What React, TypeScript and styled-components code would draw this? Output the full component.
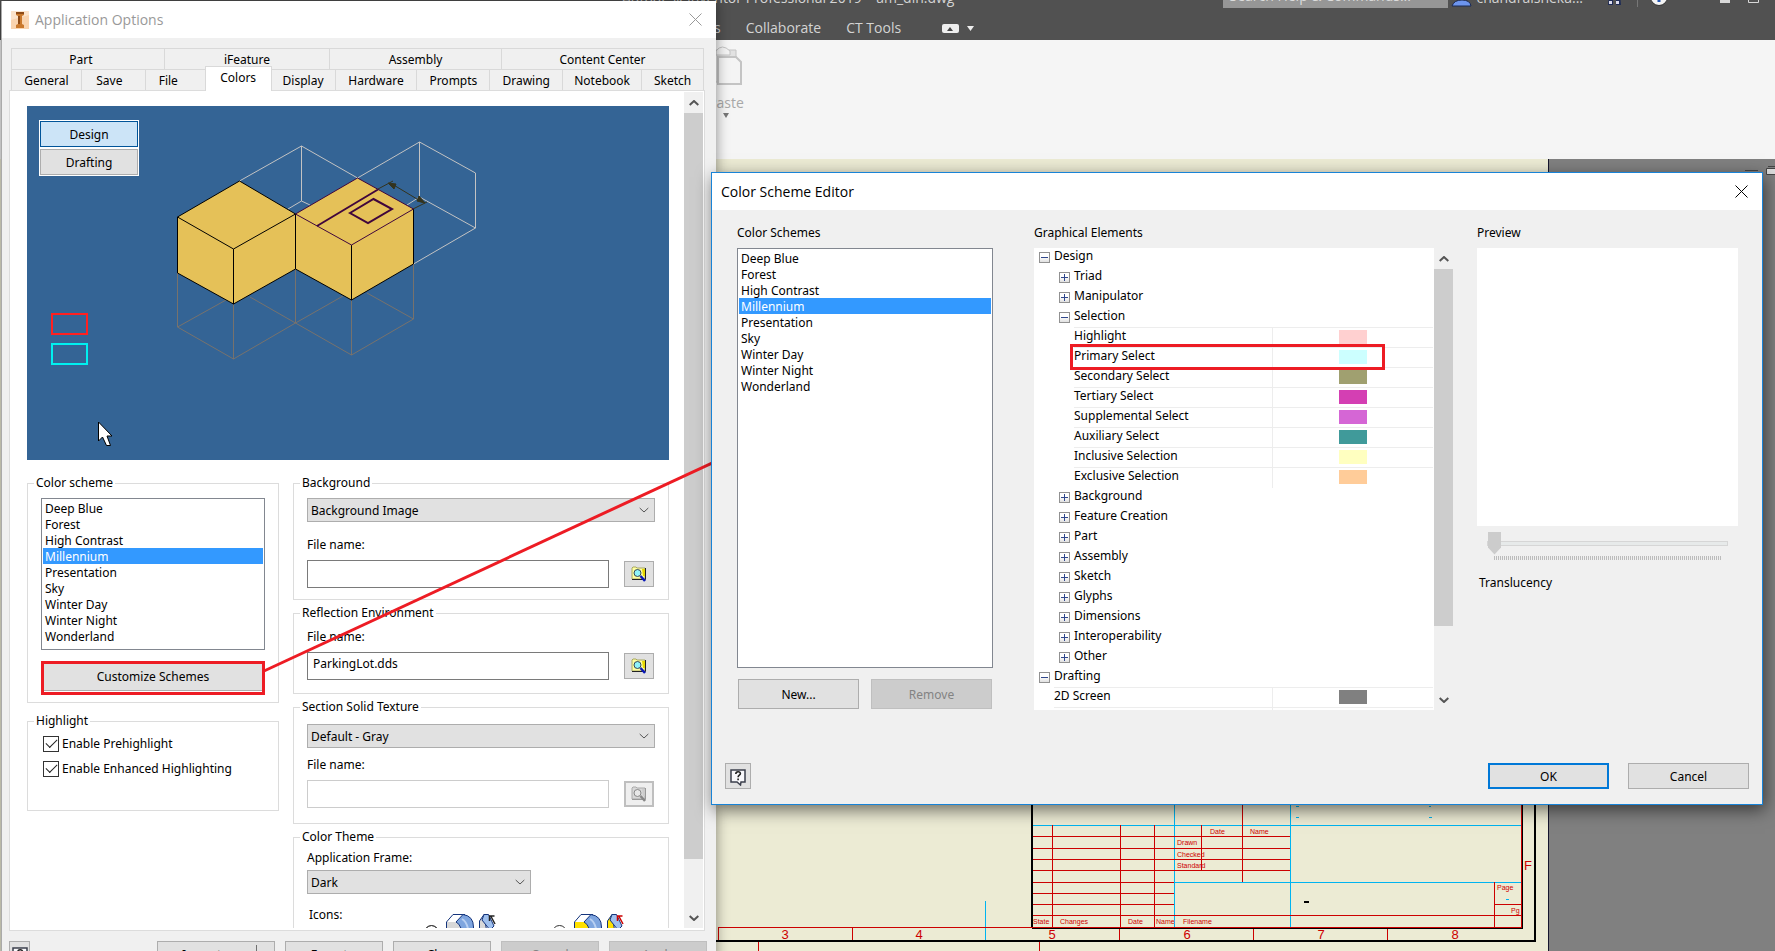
import React from "react";
import styled, { createGlobalStyle } from "styled-components";

const GlobalStyle = createGlobalStyle`
  *, *::before, *::after { box-sizing: border-box; }
  body { margin: 0; background: #808080; }
  body, button, input, select {
    font-family: "Noto Sans", "Liberation Sans", sans-serif;
    font-size: 12px;
    line-height: 16px;
    color: #000;
  }
  ul { list-style: none; margin: 0; padding: 0; }
`;

/* ---------- Application behind the dialogs ---------- */

const Desktop = styled.main`
  position: relative;
  height: 100vh;
  overflow: hidden;
  display: flex;
  flex-direction: column;
  background: #808080;
`;

const AppHeader = styled.header`
  flex: none;
  height: 40px;
  background: #515151;
  color: #d4d4d4;
  display: flex;
  flex-direction: column;
  justify-content: space-between;
  overflow: hidden;
`;

const TitleStrip = styled.div`
  height: 8px;
  display: flex;
  align-items: flex-end;
  justify-content: flex-end;
  padding-right: 2px;
`;

const StripText = styled.span`
  font-family: "Open Sans", sans-serif;
  font-size: 14px;
  line-height: 20px;
  white-space: pre;
`;

const SearchBox = styled.input`
  width: 225px;
  height: 20px;
  margin-left: 269px;
  border: 0;
  padding: 0 6px 6px;
  background: #969696;
  font-family: "Open Sans", sans-serif;
  font-size: 14px;
  &::placeholder { color: #dcdcdc; opacity: 1; }
`;

const StripIcons = styled.svg`
  margin-left: 20px;
`;

const RibbonTabs = styled.nav`
  display: flex;
  align-items: center;
  gap: 25px;
  height: 24px;
  padding: 0 0 0 686px;
`;

const RibbonTab = styled.a`
  color: #d4d4d4;
  text-decoration: none;
  font-family: "Open Sans", sans-serif;
  font-size: 14px;
  line-height: 20px;
`;

const RibbonPanel = styled.section`
  flex: none;
  height: 119px;
  padding: 5px 0 0 708px;
  background: #f5f5f5;
`;

const PasteButton = styled.button`
  display: flex;
  flex-direction: column;
  align-items: center;
  width: 36px;
  padding: 0;
  border: 0;
  background: none;
  color: #a8a8a8;
  font-family: "Open Sans", sans-serif;
  font-size: 14px;
  line-height: 20px;
`;

const Workspace = styled.section`
  flex: 1;
  min-height: 0;
  display: flex;
`;

const Sheet = styled.div`
  flex: 1;
  display: flex;
  justify-content: flex-end;
  align-items: flex-end;
  background: #ecebd4;
  border-right: 1px solid #16162e;
`;

const Margin = styled.aside`
  width: 226px;
  display: flex;
  justify-content: flex-end;
  padding-top: 4px;
`;

/* ---------- Window chrome ---------- */

const TitleBar = styled.div<{ $inactive?: boolean }>`
  flex: none;
  display: flex;
  align-items: center;
  gap: 6px;
  height: 37px;
  padding: 0 14px 0 9px;
  background: #fff;
  color: ${(p) => (p.$inactive ? "#999" : "#000")};
`;

const WindowTitle = styled.h1`
  flex: 1;
  margin: 0;
  font-family: "Open Sans", sans-serif;
  font-size: 14px;
  line-height: 20px;
  font-weight: 400;
`;

const PlainButton = styled.button`
  display: flex;
  align-items: center;
  justify-content: center;
  padding: 0;
  border: 0;
  background: none;
  color: inherit;
`;

const Button = styled.button<{ $width?: number; $primary?: boolean }>`
  display: flex;
  align-items: center;
  justify-content: center;
  flex: none;
  width: ${(p) => (p.$width ? p.$width + "px" : "auto")};
  height: 26px;
  padding: 2px 0 0;
  border: ${(p) => (p.$primary ? "2px solid #0078d7" : "1px solid #adadad")};
  background: #e1e1e1;
  &:disabled { background: #ccc; border-color: #bfbfbf; color: #838383; }
`;

const ListBox = styled.ul<{ $height: number }>`
  height: ${(p) => p.$height}px;
  padding: 1px;
  border: 1px solid #828790;
  background: #fff;
`;

const ListItem = styled.li<{ $selected: boolean }>`
  height: 16px;
  padding: 0 2px;
  line-height: 18px;
  background: ${(p) => (p.$selected ? "#3399ff" : "transparent")};
  color: ${(p) => (p.$selected ? "#fff" : "#000")};
`;

const ScrollTrack = styled.div`
  flex: none;
  width: 19px;
  display: flex;
  flex-direction: column;
  background: #f0f0f0;
`;

const ScrollArrow = styled(PlainButton)`
  flex: none;
  height: 21px;
  color: #606060;
`;

const ScrollLane = styled.div`
  flex: 1;
`;

const ScrollThumb = styled.div<{ $percent: number }>`
  height: ${(p) => p.$percent}%;
  background: #cdcdcd;
`;

/* ---------- Application Options ---------- */

const OptionsWindow = styled.section`
  position: absolute;
  top: 1px;
  left: 1px;
  bottom: -20px;
  width: 715px;
  display: flex;
  flex-direction: column;
  background: #f0f0f0;
  border-left: 1px solid #aaa;
  box-shadow: 0 0 12px rgba(0, 0, 0, 0.45);
`;

const Tabs = styled.div`
  flex: none;
  padding: 10px 12px 0 9px;
`;

const TabRow = styled.div<{ $tabs: TabSpec[] }>`
  display: grid;
  grid-template-columns: ${(p) => p.$tabs.map((t) => `minmax(0, ${t.grow}fr)`).join(" ")};
  height: 21px;
  border-left: 1px solid #d9d9d9;
`;

const Tab = styled.button<{ $trail?: number; $active?: boolean }>`
  min-width: 0;
  padding: ${(p) => (p.$active ? 0 : 2)}px ${(p) => p.$trail ?? 0}px ${(p) => (p.$active ? 2 : 0)}px 0;
  margin-top: ${(p) => (p.$active ? -3 : 0)}px;
  margin-left: ${(p) => (p.$active ? -1 : 0)}px;
  margin-bottom: ${(p) => (p.$active ? -1 : 0)}px;
  z-index: ${(p) => (p.$active ? 1 : 0)};
  border: 0;
  border-top: 1px solid #d9d9d9;
  border-right: 1px solid #d9d9d9;
  border-left: ${(p) => (p.$active ? "1px solid #d9d9d9" : "0")};
  background: ${(p) => (p.$active ? "#fff" : "#f0f0f0")};
`;

const TabPanel = styled.div`
  flex: 1;
  min-height: 0;
  display: flex;
  margin: 0 11px 0 7px;
  padding: 1px 1px 2px 0;
  border: 1px solid #dcdcdc;
  background: #fff;
`;

const PanelContent = styled.div`
  flex: 1;
  min-width: 0;
  overflow: hidden;
  padding: 14px 15px 0 17px;
`;

const PreviewCanvas = styled.div`
  position: relative;
  height: 354px;
  background: #346495;
`;

const CanvasDrawing = styled.svg`
  display: block;
  width: 100%;
  height: 100%;
`;

const ModeSwitch = styled.div`
  position: absolute;
  top: 14px;
  left: 12px;
  width: 100px;
  padding: 1px;
  display: grid;
  gap: 2px;
  background: #fff;
`;

const ModeButton = styled.button<{ $on?: boolean }>`
  height: 26px;
  padding: 2px 0 0;
  border: 1px solid ${(p) => (p.$on ? "#005499" : "#adadad")};
  background: ${(p) => (p.$on ? "#cce4f7" : "#e1e1e1")};
`;

const Columns = styled.div`
  display: flex;
  gap: 14px;
  padding-top: 15px;
`;

const Column = styled.div<{ $width?: number; $gap: number }>`
  flex: ${(p) => (p.$width ? `0 0 ${p.$width}px` : "1")};
  min-width: 0;
  display: flex;
  flex-direction: column;
  gap: ${(p) => p.$gap}px;
`;

const Group = styled.fieldset<{ $top?: number; $bottom?: number }>`
  min-width: 0;
  margin: 0;
  padding: ${(p) => p.$top ?? 7}px 13px ${(p) => p.$bottom ?? 12}px;
  border: 1px solid #dcdcdc;
`;

const HighlightGroup = styled(Group)`
  height: 98px;
`;

const GroupTitle = styled.legend`
  margin-left: -7px;
  padding: 0 2px;
`;

const Callout = styled.div`
  height: 34px;
  margin-top: 11px;
  padding: 0 0 1px;
  border: 3px solid #ed1c24;
  display: grid;
`;

const CustomizeButton = styled.button`
  padding: 0;
  border: 0;
  border-bottom: 1px solid #adadad;
  background: #e1e1e1;
`;

const CheckRow = styled.label`
  display: flex;
  align-items: center;
  gap: 3px;
  height: 16px;
  margin: 0 0 9px 2px;
`;

const CheckBox = styled.input`
  appearance: none;
  width: 16px;
  height: 16px;
  margin: 0;
  border: 1px solid #333;
  background: #fff;
  &:checked::after {
    content: "";
    display: block;
    width: 11px;
    height: 6px;
    margin: 2px 0 0 2px;
    border-left: 1px solid #222;
    border-bottom: 1px solid #222;
    transform: rotate(-45deg);
  }
`;

const SelectBox = styled.div<{ $width?: number }>`
  display: flex;
  align-items: center;
  width: ${(p) => (p.$width ? p.$width + "px" : "100%")};
  height: 24px;
  padding-right: 5px;
  border: 1px solid #adadad;
  background: #e1e1e1;
`;

const Select = styled.select`
  appearance: none;
  flex: 1;
  height: 22px;
  border: 0;
  padding: 1px 3px 0;
  background: none;
`;

const FieldLabel = styled.label<{ $above: number; $below?: number }>`
  display: block;
  line-height: 18px;
  margin: ${(p) => p.$above}px 0 ${(p) => p.$below ?? 6}px;
`;

const FileRow = styled.div`
  display: flex;
  align-items: center;
  gap: 15px;
  padding-right: 1px;
`;

const TextBox = styled.input`
  flex: 1;
  min-width: 0;
  height: 28px;
  padding: 0 5px 6px;
  border: 1px solid #7a7a7a;
  background: #fff;
  &:disabled { border-color: #ccc; }
`;

const BrowseButton = styled(Button)`
  padding: 0;
  &:disabled { background: #efefef; border: 2px solid #bfbfbf; }
`;

const IconChoices = styled.div`
  display: flex;
  align-items: flex-start;
  gap: 55px;
  padding-top: 13px;
`;

const ChoiceLabel = styled.span`
  width: 62px;
  padding-left: 2px;
`;

const IconChoice = styled.label`
  flex: none;
  display: flex;
  align-items: flex-start;
  gap: 6px;
  padding-top: 5px;
`;

const Radio = styled.input`
  appearance: none;
  width: 15px;
  height: 15px;
  margin: 13px 0 0;
  border: 1px solid #333;
  border-radius: 50%;
  background: #fff;
  &:checked { box-shadow: inset 0 0 0 3px #fff; background: #222; }
`;

const OptionsFooter = styled.footer`
  flex: none;
  height: 40px;
  display: flex;
  gap: 10px;
  padding: 10px 9px 0 7px;
`;

const Spacer = styled.span`
  flex: 1;
`;

const SplitButton = styled(Button)`
  justify-content: flex-start;
  padding-left: 24px;
  &::after {
    content: "";
    height: 20px;
    margin: 0 17px 0 auto;
    border-left: 1px solid #707070;
  }
`;

const Leader = styled.svg`
  position: absolute;
  top: 458px;
  left: 260px;
  pointer-events: none;
`;

/* ---------- Color Scheme Editor ---------- */

const EditorWindow = styled.section`
  position: absolute;
  top: 172px;
  left: 711px;
  right: 12px;
  border: 1px solid #1883d7;
  background: #f0f0f0;
  box-shadow: 2px 5px 16px rgba(0, 0, 0, 0.55);
`;

const EditorBody = styled.div`
  display: flex;
  padding: 14px 24px 0 25px;
`;

const SchemeColumn = styled.div`
  flex: none;
  width: 256px;
`;

const TreeColumn = styled.div`
  flex: none;
  width: 419px;
  margin-left: 41px;
`;

const PreviewColumn = styled.div`
  flex: 1;
  min-width: 0;
  margin-left: 24px;
`;

const Heading = styled.h2`
  margin: 0 0 6px;
  font-size: 12px;
  line-height: 18px;
  font-weight: 400;
`;

const ButtonPair = styled.div`
  display: flex;
  gap: 12px;
  padding: 11px 1px 0;
`;

const SchemeButton = styled(Button)`
  flex: 1;
  height: 30px;
`;

const TreeFrame = styled.div`
  display: flex;
  height: 462px;
`;

const Tree = styled.div`
  position: relative;
  flex: 1;
  overflow: hidden;
  background: #fff;
`;

const TreeRow = styled.div<{ $level: number }>`
  display: flex;
  align-items: flex-start;
  height: 20px;
  padding-left: ${(p) => 5 + p.$level * 20}px;
`;

const TreeToggle = styled.button`
  flex: none;
  width: 11px;
  height: 11px;
  margin: 4px 4px 0 0;
  padding: 0;
  border: 1px solid #919191;
  background: linear-gradient(#fff 40%, #e0e0e0);
  display: flex;
`;

const ColorRow = styled.div<{ $indent: number }>`
  display: flex;
  height: 20px;
  margin: 0 1px 0 ${(p) => p.$indent}px;
  box-shadow: 0 -1px 0 #ededed;
`;

const ColorName = styled.span`
  flex: 1;
`;

const ColorCell = styled.span`
  width: 161px;
  padding: 2px 0 0 66px;
  border-left: 1px solid #ededed;
`;

const Swatch = styled.button<{ $color: string }>`
  display: block;
  width: 28px;
  height: 14px;
  padding: 0;
  border: 0;
  background: ${(p) => p.$color};
`;

const RowCallout = styled.div`
  position: absolute;
  top: 96px;
  left: 36px;
  width: 315px;
  height: 26px;
  border: 3px solid #ed1c24;
  pointer-events: none;
`;

const PreviewBox = styled.div`
  height: 278px;
  background: #fff;
`;

const Slider = styled.input`
  display: block;
  appearance: none;
  width: calc(100% - 20px);
  height: 24px;
  margin: 5px 10px 0;
  background: none;
  &::-webkit-slider-runnable-track {
    height: 5px;
    border: 1px solid #d6d6d6;
    background: #e7eaea;
  }
  &::-webkit-slider-thumb {
    appearance: none;
    width: 13px;
    height: 23px;
    margin-top: -10px;
    background: #ccc;
    clip-path: polygon(0 0, 100% 0, 100% 70%, 50% 100%, 0 70%);
  }
`;

const Ticks = styled.div`
  height: 4px;
  margin: 1px 17px 15px;
  background: repeating-linear-gradient(90deg, #bcbcbc 0 1px, transparent 1px 2px);
`;

const SliderLabel = styled.label`
  padding-left: 2px;
`;

const EditorFooter = styled.footer`
  display: flex;
  gap: 19px;
  padding: 53px 13px 15px 13px;
`;

/* ---------- Small drawings ---------- */

const CloseIcon = () => (
  <svg width="13" height="13" viewBox="0 0 13 13" stroke="currentColor" fill="none">
    <path d="M.5 .5l12 12M12.5 .5l-12 12" />
  </svg>
);

const Chevron = ({ up, heavy }: { up?: boolean; heavy?: boolean }) => (
  <svg width="10" height="6" viewBox="0 0 10 6" fill="none" stroke="#555" strokeWidth={heavy ? 2 : 1}>
    <path d={up ? "M.7 5L5 1l4.300 4" : "M.7 1L5 5l4.300-4"} />
  </svg>
);

const InventorLogo = () => (
  <svg width="18" height="18" viewBox="0 0 18 18">
    <rect width="18" height="18" fill="#fbe3cb" />
    <path d="M0 18V9l18-5v14z" fill="#f9d3ae" />
    <path d="M5 1h8v3l-2 1v8l2 1v3H5v-3l2-1V5L5 4z" fill="#c9782c" />
    <path d="M5 1h8v2H5zM7 5h2v8H7z" fill="#8d4a16" />
  </svg>
);

const FolderIcon = ({ gray }: { gray?: boolean }) => (
  <svg width="16" height="16" viewBox="0 0 16 16">
    <path d="M1 13V2l1-1h3l1 1h8v11z" fill={gray ? "#d8d8d8" : "#ffffa0"} stroke={gray ? "#aaa" : "#a8a860"} />
    <path d="M14.500 2v11.500H1" fill="none" stroke={gray ? "#999" : "#222"} />
    <path d="M11 3h3v7h-2z" fill={gray ? "#ccc" : "#e6d800"} />
    <circle cx="6.500" cy="7" r="3.500" fill={gray ? "#e8e8e8" : "#8ff4fa"} stroke={gray ? "#888" : "#345"} />
    <path d="M9.500 10l4.500 5" stroke={gray ? "#888" : "#0a18b8"} strokeWidth="2.500" />
  </svg>
);

const HelpIcon = () => (
  <svg width="16" height="17" viewBox="0 0 16 17">
    <path d="M1 1h14v12H11l-.500 3L7 13H1z" fill="#f8f8fb" stroke="#3b3f4c" strokeWidth="1.500" />
    <path d="M5.800 5c0-3 4.600-3 4.600-.5 0 1.800-2.300 1.600-2.300 3.700M8.100 9.600v1.600" fill="none" stroke="#222" strokeWidth="1.600" />
  </svg>
);

const SolidIcons = ({ face, arrow }: { face: string; arrow: string }) => (
  <svg width="52" height="28" viewBox="0 0 52 28">
    <path d="M1.500 10L8 2.500H20L12 10V27H1.500z" fill="#fff" stroke="#14347c" />
    <path d="M2 10h10q4 2 5 8v10H2z" fill={face} />
    <path d="M11 10L18 2.500Q28.500 4 28.500 15V28H17.500Q17.500 13 11 10z" fill="#7ea5df" stroke="#14347c" />
    <path d="M17 7q7 4 7 20" fill="none" stroke="#b9d0f2" strokeWidth="2" />
    <path d="M34.500 9L39 2.500L43 27h-8.500z" fill={face} stroke="#14347c" />
    <path d="M39 2.500h4.500L49 14l-4 4-8-10z" fill="#9fc0ee" stroke="#14347c" />
    <path d="M50 12L46 4.500M44.500 9V4h5" fill="none" stroke={arrow} strokeWidth="1.500" />
  </svg>
);

const CubeDrawing = () => (
  <CanvasDrawing viewBox="27 106 642 354" preserveAspectRatio="xMinYMin meet">
    <g fill="none" stroke="#77726d">
      <path d="M177.500 273V327L233.500 359L295.500 323L351.500 355L413.500 319V264M233.500 304V359M295.500 269V323M351.500 300V355" />
      <path d="M177.500 327L226 300M295.500 323L250 297M295.500 323L343 296M413.500 319L367 293" />
    </g>
    <g fill="none" stroke="#c3c3c3">
      <path d="M239.500 181L301.500 146L357.500 178L419.500 142L475.500 173V228L413.500 264M301.500 146V201M288 209L301.500 201L310 205" />
      <path d="M419.500 142V197M407 205L419.500 197L475.500 228" />
    </g>
    <path d="M177.500 217L239.500 181L295.500 214L357.500 178L413.500 209V264L351.500 300L295.500 269L233.500 304L177.500 273Z" fill="#e5c158" />
    <path d="M295.500 214L239.500 181L177.500 217V273L233.500 304L295.500 269L351.500 300L413.500 264V209M177.500 217L233.500 249L295.500 214V269M233.500 249V304M351.500 245V300" fill="none" stroke="#000" />
    <path d="M295.500 214L357.500 178L413.500 209L351.500 245Z" fill="none" stroke="#40063c" />
    <path d="M317 226L378 189.500M350 213L373.500 199L392 209L368 223Z" fill="none" stroke="#40063c" strokeWidth="2" />
    <path d="M378 189L393 181M392 184L422 202M413 209L427 202" fill="none" stroke="#33331d" />
    <path d="M388 183l8 1-2 5zM425 203l-8-2 2-5z" fill="#33331d" stroke="#33331d" />
    <rect x="52" y="314" width="35" height="20" fill="none" stroke="#ff2020" strokeWidth="2" />
    <rect x="52" y="344" width="35" height="20" fill="none" stroke="#00f0f0" strokeWidth="2" />
    <path d="M98.500 422V441L102.500 437L106.500 445.500H110.500L107 436H112Z" fill="#fff" stroke="#000" />
  </CanvasDrawing>
);

const red = "#cc0000";
const cyan = "#00b4f0";

const sheetNotes: [number, number, string][] = [
  [1210, 834, "Date"], [1250, 834, "Name"], [1177, 845, "Drawn"], [1177, 857, "Checked"],
  [1177, 868, "Standard"], [1033, 924, "State"], [1060, 924, "Changes"], [1128, 924, "Date"],
  [1156, 924, "Name"], [1183, 924, "Filename"], [1497, 890, "Page"], [1511, 913, "Pg"],
];

const zones: [number, string][] = [[785, "3"], [919, "4"], [1052, "5"], [1187, "6"], [1321, "7"], [1455, "8"]];

const TitleBlock = () => (
  <svg width="832" height="151" viewBox="716 800 832 151" fill="none">
    <g stroke={cyan}>
      <path d="M1174.500 800V927M1290.500 800V927M1032 825.500H1521M1174 882.500H1521M985.500 901V941" />
      <path d="M1296 806.500h3M1296 817.500h3M1429 806.500h2M1429 817.500h3M1506 899.500h3" />
    </g>
    <g stroke={red}>
      <path d="M1242.500 800V882M1201.500 825V870M1052.500 825V927M1120.500 825V927M1154.500 825V927M1494.500 882V927M1521.500 800V927" />
      <path d="M1032 836.500H1290M1032 848.500H1290M1032 859.500H1290M1032 870.500H1290M1032 882.500H1174M1032 893.500H1174M1032 904.500H1174M1032 915.500H1521M1494 904.500H1521M718 927.500H1522" />
      <path d="M718.500 927V941M852.500 927V941M1119.500 927V941M1253.500 927V941M1387.500 927V941M1039.500 941V951M758.500 942V951" />
    </g>
    <path d="M1032 800V927M1535 800V942M716 941H1536M1304 902H1309" stroke="#000" strokeWidth="2" />
    <path d="M1032 928.500H1523M1522.500 800V929" stroke="#000" />
    <g fill={red} fontFamily="Liberation Sans, sans-serif" fontSize="7">
      {sheetNotes.map(([x, y, text]) => (
        <text key={x + text} x={x} y={y}>{text}</text>
      ))}
    </g>
    <g fill={red} fontFamily="Liberation Sans, sans-serif" fontSize="13" textAnchor="middle">
      {zones.map(([x, text]) => (
        <text key={text} x={x} y="939">{text}</text>
      ))}
      <text x="1528" y="870">F</text>
    </g>
  </svg>
);

/* ---------- Composed parts ---------- */

const schemes = ["Deep Blue", "Forest", "High Contrast", "Millennium", "Presentation", "Sky", "Winter Day", "Winter Night", "Wonderland"];

const SchemeList = ({ height }: { height: number }) => (
  <ListBox $height={height} role="listbox" aria-label="Color schemes">
    {schemes.map((name) => (
      <ListItem key={name} role="option" aria-selected={name === "Millennium"} $selected={name === "Millennium"}>
        {name}
      </ListItem>
    ))}
  </ListBox>
);

const ScrollBar = ({ percent }: { percent: number }) => (
  <ScrollTrack>
    <ScrollArrow aria-label="Scroll up"><Chevron up heavy /></ScrollArrow>
    <ScrollLane><ScrollThumb $percent={percent} /></ScrollLane>
    <ScrollArrow aria-label="Scroll down"><Chevron heavy /></ScrollArrow>
  </ScrollTrack>
);

const DropDown = ({ id, value, width, label }: { id?: string; value: string; width?: number; label?: string }) => (
  <SelectBox $width={width}>
    <Select id={id} aria-label={label} defaultValue={value}>
      <option>{value}</option>
    </Select>
    <Chevron />
  </SelectBox>
);

const FileField = ({ id, above, value = "", disabled }: { id: string; above: number; value?: string; disabled?: boolean }) => (
  <>
    <FieldLabel htmlFor={id} $above={above}>File name:</FieldLabel>
    <FileRow>
      <TextBox id={id} type="text" defaultValue={value} disabled={disabled} />
      <BrowseButton $width={30} disabled={disabled} aria-label="Browse"><FolderIcon gray={disabled} /></BrowseButton>
    </FileRow>
  </>
);

type TabSpec = { name: string; grow: number; trail?: number };

const upperTabs: TabSpec[] = [
  { name: "Part", grow: 153, trail: 14 },
  { name: "iFeature", grow: 165 },
  { name: "Assembly", grow: 172 },
  { name: "Content Center", grow: 202 },
];

const lowerTabs: TabSpec[] = [
  { name: "General", grow: 70 },
  { name: "Save", grow: 64, trail: 8 },
  { name: "File", grow: 60, trail: 14 },
  { name: "Colors", grow: 66 },
  { name: "Display", grow: 64 },
  { name: "Hardware", grow: 82 },
  { name: "Prompts", grow: 73 },
  { name: "Drawing", grow: 73 },
  { name: "Notebook", grow: 79 },
  { name: "Sketch", grow: 62 },
];

type TreeEntry = { name: string; level?: number; open?: boolean; color?: string; indent?: number };

const nodes: TreeEntry[] = [
  { name: "Design", level: 0, open: true },
  { name: "Triad", level: 1 },
  { name: "Manipulator", level: 1 },
  { name: "Selection", level: 1, open: true },
  { name: "Highlight", color: "#ffd0d0", indent: 40 },
  { name: "Primary Select", color: "#ccffff", indent: 40 },
  { name: "Secondary Select", color: "#a0a070", indent: 40 },
  { name: "Tertiary Select", color: "#d43fb3", indent: 40 },
  { name: "Supplemental Select", color: "#d566d5", indent: 40 },
  { name: "Auxiliary Select", color: "#409a9a", indent: 40 },
  { name: "Inclusive Selection", color: "#ffffc0", indent: 40 },
  { name: "Exclusive Selection", color: "#ffcc99", indent: 40 },
  ...["Background", "Feature Creation", "Part", "Assembly", "Sketch", "Glyphs", "Dimensions", "Interoperability", "Other"].map(
    (name) => ({ name, level: 1 }),
  ),
  { name: "Drafting", level: 0, open: true },
  { name: "2D Screen", color: "#808080", indent: 20 },
  { name: "", color: "#fff", indent: 20 },
];

const TreeNode = ({ node }: { node: TreeEntry }) =>
  node.color ? (
    <ColorRow $indent={node.indent ?? 0} role="treeitem">
      <ColorName>{node.name}</ColorName>
      <ColorCell><Swatch $color={node.color} aria-label={node.name + " color"} /></ColorCell>
    </ColorRow>
  ) : (
    <TreeRow $level={node.level ?? 0} role="treeitem" aria-expanded={!!node.open}>
      <TreeToggle aria-label={"Toggle " + node.name}>
        <svg width="9" height="9" stroke="#30488c">
          <path d={node.open ? "M1 4.500h7" : "M1 4.500h7M4.500 1v7"} />
        </svg>
      </TreeToggle>
      {node.name}
    </TreeRow>
  );

const ApplicationOptions = () => (
  <OptionsWindow aria-label="Application Options">
    <TitleBar $inactive>
      <InventorLogo />
      <WindowTitle>Application Options</WindowTitle>
      <PlainButton aria-label="Close"><CloseIcon /></PlainButton>
    </TitleBar>
    <Tabs>
      <TabRow $tabs={upperTabs}>
        {upperTabs.map((t) => <Tab key={t.name} $trail={t.trail}>{t.name}</Tab>)}
      </TabRow>
      <TabRow $tabs={lowerTabs}>
        {lowerTabs.map((t) => (
          <Tab key={t.name} $trail={t.trail} $active={t.name === "Colors"}>{t.name}</Tab>
        ))}
      </TabRow>
    </Tabs>
    <TabPanel>
      <PanelContent>
        <PreviewCanvas>
          <CubeDrawing />
          <ModeSwitch>
            <ModeButton $on>Design</ModeButton>
            <ModeButton>Drafting</ModeButton>
          </ModeSwitch>
        </PreviewCanvas>
        <Columns>
          <Column $width={252} $gap={10}>
            <Group $bottom={7}>
              <GroupTitle>Color scheme</GroupTitle>
              <SchemeList height={152} />
              <Callout><CustomizeButton>Customize Schemes</CustomizeButton></Callout>
            </Group>
            <HighlightGroup>
              <GroupTitle>Highlight</GroupTitle>
              <CheckRow><CheckBox type="checkbox" defaultChecked />Enable Prehighlight</CheckRow>
              <CheckRow><CheckBox type="checkbox" defaultChecked />Enable Enhanced Highlighting</CheckRow>
            </HighlightGroup>
          </Column>
          <Column $gap={5}>
            <Group $bottom={11}>
              <GroupTitle>Background</GroupTitle>
              <DropDown value="Background Image" label="Background" />
              <FileField id="background-file" above={14} />
            </Group>
            <Group $bottom={13}>
              <GroupTitle>Reflection Environment</GroupTitle>
              <FileField id="reflection-file" above={0} value="ParkingLot.dds" />
            </Group>
            <Group $top={9} $bottom={15}>
              <GroupTitle>Section Solid Texture</GroupTitle>
              <DropDown value="Default - Gray" label="Section solid texture" />
              <FileField id="texture-file" above={8} disabled />
            </Group>
            <Group $top={4}>
              <GroupTitle>Color Theme</GroupTitle>
              <FieldLabel htmlFor="app-frame" $above={0} $below={3}>Application Frame:</FieldLabel>
              <DropDown id="app-frame" value="Dark" width={224} />
              <IconChoices>
                <ChoiceLabel>Icons:</ChoiceLabel>
                <IconChoice>
                  <Radio type="radio" name="icons" defaultChecked aria-label="Light icons" />
                  <SolidIcons face="#d8d8d8" arrow="#222" />
                </IconChoice>
                <IconChoice>
                  <Radio type="radio" name="icons" aria-label="Amber icons" />
                  <SolidIcons face="#ffe100" arrow="#c00" />
                </IconChoice>
              </IconChoices>
            </Group>
          </Column>
        </Columns>
      </PanelContent>
      <ScrollBar percent={94} />
    </TabPanel>
    <OptionsFooter>
      <Button $width={21} aria-label="Help"><HelpIcon /></Button>
      <Spacer />
      <SplitButton $width={118}>Import...</SplitButton>
      <Button $width={98}>Export...</Button>
      <Button $width={98}>Close</Button>
      <Button $width={98} disabled>Cancel</Button>
      <Button $width={98} disabled>Apply</Button>
    </OptionsFooter>
    <Leader width="450" height="216">
      <path d="M2 212L450 4" stroke="#ed1c24" strokeWidth="3" />
    </Leader>
  </OptionsWindow>
);

const ColorSchemeEditor = () => (
  <EditorWindow aria-label="Color Scheme Editor">
    <TitleBar>
      <WindowTitle>Color Scheme Editor</WindowTitle>
      <PlainButton aria-label="Close"><CloseIcon /></PlainButton>
    </TitleBar>
    <EditorBody>
      <SchemeColumn>
        <Heading>Color Schemes</Heading>
        <SchemeList height={420} />
        <ButtonPair>
          <SchemeButton>New...</SchemeButton>
          <SchemeButton disabled>Remove</SchemeButton>
        </ButtonPair>
      </SchemeColumn>
      <TreeColumn>
        <Heading>Graphical Elements</Heading>
        <TreeFrame>
          <Tree role="tree">
            {nodes.map((node, i) => <TreeNode key={i} node={node} />)}
            <RowCallout />
          </Tree>
          <ScrollBar percent={85} />
        </TreeFrame>
      </TreeColumn>
      <PreviewColumn>
        <Heading>Preview</Heading>
        <PreviewBox />
        <Slider id="translucency" type="range" min="0" max="100" defaultValue="0" disabled />
        <Ticks />
        <SliderLabel htmlFor="translucency">Translucency</SliderLabel>
      </PreviewColumn>
    </EditorBody>
    <EditorFooter>
      <Button $width={26} aria-label="Help"><HelpIcon /></Button>
      <Spacer />
      <Button $width={121} $primary>OK</Button>
      <Button $width={121}>Cancel</Button>
    </EditorFooter>
  </EditorWindow>
);

export default function App() {
  return (
    <>
      <GlobalStyle />
      <Desktop>
        <AppHeader>
          <TitleStrip>
            <StripText>{"Autodesk Inventor Professional 2019    am_din.dwg"}</StripText>
            <SearchBox type="search" aria-label="Search" placeholder="Search Help & Commands..." />
            <svg width="28" height="14" viewBox="0 0 28 14">
              <path d="M4 12q2-6 10-6t9 6z" fill="#6d95ee" stroke="#1b2a55" />
            </svg>
            <StripText>chandraisheka...</StripText>
            <StripIcons width="170" height="14" viewBox="0 0 170 14">
              <path d="M6 0h4v11H5zM13 0h4l1 11h-5z" fill="#1e2b55" />
              <path d="M6 7h3v3H6zM13 7h3v3h-3z" fill="#dde" />
              <path d="M34.500 0V13" stroke="#777" />
              <circle cx="56" cy="3" r="8.500" fill="#f4f4f4" stroke="#333" />
              <path d="M56 0v8" stroke="#2455b0" strokeWidth="3" />
              <path d="M117 0h10v9h-10z" fill="#d8d8d8" />
              <path d="M145.500 0v8.500h10V0" fill="none" stroke="#d8d8d8" />
            </StripIcons>
          </TitleStrip>
          <RibbonTabs>
            <RibbonTab href="#tools">Tools</RibbonTab>
            <RibbonTab href="#collaborate">Collaborate</RibbonTab>
            <RibbonTab href="#ct-tools">CT Tools</RibbonTab>
            <PlainButton aria-label="Ribbon display">
              <svg width="48" height="12" viewBox="0 0 48 12">
                <rect x="16" y="2" width="17" height="9" rx="2" fill="#eee" />
                <path d="M21 9l3-4 3 4z" fill="#444" />
                <path d="M41 4h7l-3.500 5z" fill="#eee" />
              </svg>
            </PlainButton>
          </RibbonTabs>
        </AppHeader>
        <RibbonPanel>
          <PasteButton>
            <svg width="36" height="48" viewBox="0 0 36 48" fill="#f4f4f4" stroke="#c4c4c4">
              <path d="M1 5h27v32H1z" fill="#e2e2e2" />
              <path d="M8 6q6-8 14 0v4H8z" />
              <path d="M10 12h18l5 5v22H10z" strokeWidth="2" />
            </svg>
            Paste
            <svg width="6" height="5" viewBox="0 0 6 5"><path d="M0 0h6L3 5z" fill="#777" /></svg>
          </PasteButton>
        </RibbonPanel>
        <Workspace>
          <Sheet><TitleBlock /></Sheet>
          <Margin>
            <svg width="30" height="14" viewBox="0 0 30 14">
              <path d="M0 7.500h13" stroke="#444" />
              <path d="M23 3.500h7M21.500 5.500h9v6h-9z" fill="#ddd" stroke="#444" />
            </svg>
          </Margin>
        </Workspace>
        <ApplicationOptions />
        <ColorSchemeEditor />
      </Desktop>
    </>
  );
}
